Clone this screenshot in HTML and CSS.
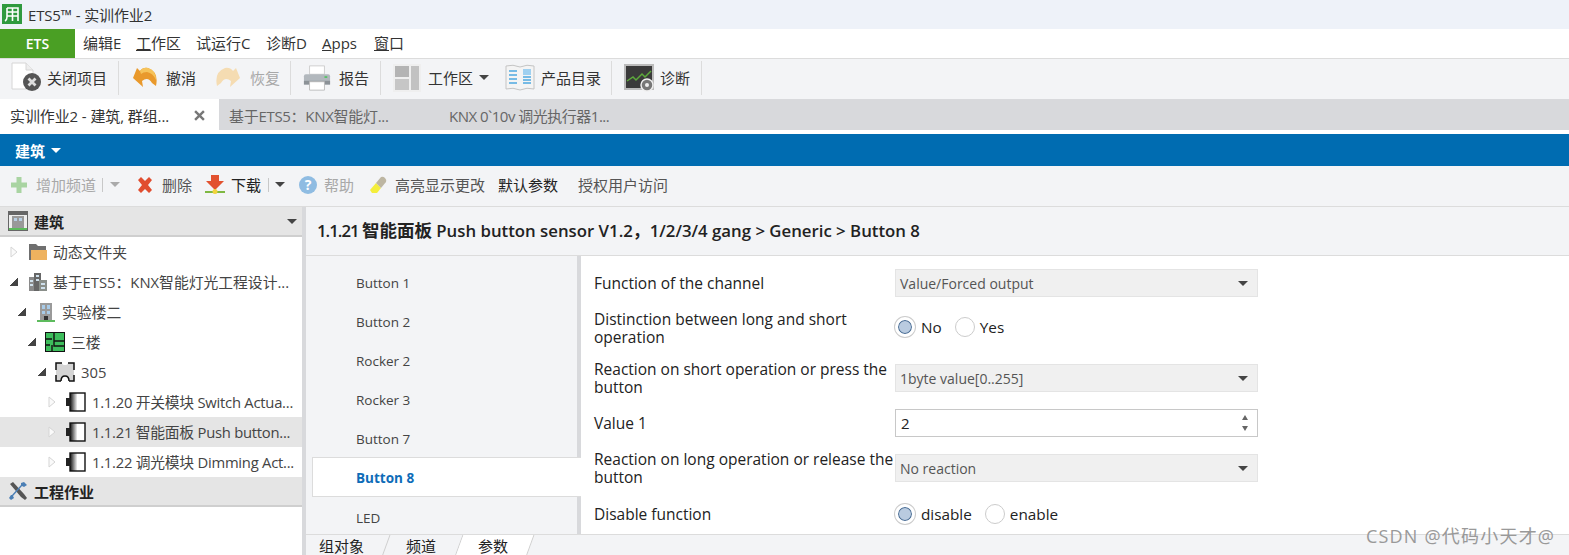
FILE: index.html
```html
<!DOCTYPE html>
<html lang="zh">
<head>
<meta charset="utf-8">
<title>ETS5</title>
<link rel="stylesheet" href="styles.css">
</head>
<body>
<div class="titlebar">
  <svg class="logo" viewBox="0 0 20 20"><rect width="20" height="20" fill="#2f9a3f"/><path d="M5 4h11v13M5 4v9q0 3-2 4M5 8h11M5 12h11M10.500 4v13" fill="none" stroke="#fff" stroke-width="1.600"/></svg>
  <span>ETS5™ - 实训作业2</span>
</div>
<nav class="menubar">
  <div class="ets">ETS</div>
  <span class="m m1">编辑E</span>
  <span class="m m2"><u>工</u>作区</span>
  <span class="m m3">试运行C</span>
  <span class="m m4">诊断D</span>
  <span class="m m5"><u>A</u>pps</span>
  <span class="m m6"><u>窗</u>口</span>
</nav>
<div class="toolbar">
  <div class="tool t-close">
    <svg class="i32" viewBox="0 0 32 32"><path d="M2 1h14l7 7v19H2z" fill="#fff" stroke="#d6d6d6"/><path d="M16 1v7h7" fill="#eee" stroke="#d6d6d6"/><circle cx="22" cy="20" r="9" fill="#555"/><path d="M18.500 16.500l7 7M25.500 16.500l-7 7" stroke="#ddd" stroke-width="2.800"/></svg>
    <span>关闭项目</span>
  </div>
  <div class="tool t-undo">
    <svg class="i26" viewBox="0 0 26 26"><path d="M1 13l10 9-1-6q6-5 10 2l4 3q3-14-8-18-5-1-8 3L5 3z" fill="#e9992c"/><path d="M8 6q3-4 8-3 8 2 8 12-3-7-9-8-4 0-6 2z" fill="#f6c35a"/></svg>
    <span>撤消</span>
  </div>
  <div class="tool t-redo off">
    <svg class="i26" viewBox="0 0 26 26"><path d="M25 13l-10 9 1-6q-6-5-10 2l-4 3q-3-14 8-18 5-1 8 3l3-3z" fill="#f5dcb2"/></svg>
    <span>恢复</span>
  </div>
  <div class="tool t-report">
    <svg class="i30" viewBox="0 0 30 30"><path d="M7 2h16v9H7z" fill="#fff" stroke="#ccc"/><path d="M3 11h24q2 0 2 2v9H1v-9q0-2 2-2z" fill="#b2b8bd"/><path d="M1 18h28v4H1z" fill="#8c9297"/><path d="M7 19h16v9H7z" fill="#fff" stroke="#bbb"/><rect x="23" y="13" width="3" height="2" fill="#5bc26a"/></svg>
    <span>报告</span>
  </div>
  <div class="tool t-work">
    <svg class="i30" viewBox="0 0 28 28"><rect width="28" height="28" fill="#efefef"/><rect x="2" y="2" width="14" height="11" fill="#b4b4b4"/><rect x="2" y="15" width="14" height="11" fill="#c6c6c6"/><rect x="18" y="2" width="8" height="24" fill="#c2c2c2"/></svg>
    <span>工作区</span>
    <i class="caret dark"></i>
  </div>
  <div class="tool t-cat">
    <svg class="i30" viewBox="0 0 30 28"><path d="M1 2q7-2 14 1 7-3 14-1v23q-7-2-14 1-7-3-14-1z" fill="#f4f4f4" stroke="#c4c4c4"/><path d="M4 7h8M4 11h8M4 15h8M4 19h8M18 13h8M18 16h8M18 19h8" stroke="#4ea8e0" stroke-width="1.500"/><rect x="18" y="5" width="8" height="6" fill="#9fd0f0"/></svg>
    <span>产品目录</span>
  </div>
  <div class="tool t-diag">
    <svg class="i30" viewBox="0 0 30 28"><rect x="1" y="1" width="28" height="24" fill="#3a3a3a" stroke="#bbb" stroke-width="2"/><path d="M3 17l6-4 3 3 6-6 3 3 6-6" fill="none" stroke="#5da93c" stroke-width="1.500"/><circle cx="23" cy="21" r="6" fill="#777" stroke="#eee" stroke-width="1.500"/><circle cx="23" cy="21" r="2" fill="#eee"/></svg>
    <span>诊断</span>
  </div>
</div>
<div class="tabs">
  <div class="tab active"><span>实训作业2 - 建筑, 群组...</span><svg class="x" viewBox="0 0 10 10"><path d="M1 1l8 8M9 1l-8 8" stroke="#777" stroke-width="2.200"/></svg></div>
  <div class="tab t2">基于ETS5：KNX智能灯...</div>
  <div class="tab t3">KNX 0`10v 调光执行器1...</div>
</div>
<div class="bluebar"><b>建筑</b><i class="caret white"></i></div>
<div class="subbar">
  <svg class="i18 s-add" viewBox="0 0 18 18"><path d="M6.500 1h5v5.500H17v5h-5.500V17h-5v-5.500H1v-5h5.500z" fill="#a9d4a2"/></svg>
  <span class="s-t1 off">增加频道</span><i class="vr s-v1"></i><i class="caret grey s-c1"></i>
  <svg class="i18 s-del" viewBox="0 0 18 18"><path d="M2 4l3-3 4 4 4-4 3 3-4 5 4 5-3 3-4-4-4 4-3-3 4-5z" fill="#e14d2f"/></svg>
  <span class="s-t2">删除</span>
  <svg class="i20 s-dl" viewBox="0 0 20 20"><path d="M6 0h8v6h5l-9 9-9-9h5z" fill="#e2522f"/><path d="M0 16h20v2H0z" fill="#7fb843"/><circle cx="10" cy="16.500" r="2.500" fill="#f2d43c"/></svg>
  <span class="s-t3 dk">下载</span><i class="vr s-v2"></i><i class="caret dark s-c2"></i>
  <svg class="i18 s-help" viewBox="0 0 18 18"><circle cx="9" cy="9" r="9" fill="#8fbce2"/><text x="9" y="14" text-anchor="middle" class="qm">?</text></svg>
  <span class="s-t4 off">帮助</span>
  <svg class="i18 s-hl" viewBox="0 0 18 18"><path d="M1 14l6-7 5 5-4 5H3z" fill="#f4ee3c"/><path d="M7 7l5-6q2-1 4 1t1 4l-5 6z" fill="#bdb6a2"/></svg>
  <span class="s-t5">高亮显示更改</span>
  <span class="s-t6 dk">默认参数</span>
  <span class="s-t7">授权用户访问</span>
</div>
<main class="work">
  <aside class="side">
    <div class="side-head">
      <svg class="i20" viewBox="0 0 20 20"><rect x=".5" y=".5" width="19" height="19" fill="#eee" stroke="#666"/><rect x="1" y="1" width="18" height="3" fill="#666"/><rect x="4" y="5" width="12" height="13" fill="#999"/><path d="M6 7h3v3H6zM11 7h3v3h-3z" fill="#b8cfe4"/><path d="M1 17h18v2H1z" fill="#5dbb5d"/></svg>
      <b>建筑</b>
      <i class="caret dark end"></i>
    </div>
    <div class="row l0"><svg class="tws" viewBox="0 0 8 12"><path d="M1 1l6 5-6 5z" fill="#fafafa" stroke="#d5d5d5"/></svg><svg class="i20" viewBox="0 0 20 20"><path d="M1 2h7l2 2h8v4H1z" fill="#6f6f6f"/><path d="M2 18V4" stroke="#6f6f6f" stroke-width="2"/><path d="M3 8h16v10H3z" fill="#eeb25f"/></svg><span>动态文件夹</span></div>
    <div class="row l0"><i class="tw"></i><svg class="i20" viewBox="0 0 20 20"><path d="M1 5h9v14H1z" fill="#8a8a8a"/><path d="M6 1h7v18H6z" fill="#666"/><path d="M11 8h8v11h-8z" fill="#8a8f8a"/><path d="M8 3h3v2H8zM8 7h3v2H8zM2 8h3v2H2zM2 12h3v2H2zM13 11h4v2h-4zM13 15h4v2h-4z" fill="#cfe0ec"/></svg><span>基于ETS5：KNX智能灯光工程设计...</span></div>
    <div class="row l1"><i class="tw"></i><svg class="i20" viewBox="0 0 20 20"><path d="M4 1h12v17H4z" fill="#9a9a9a"/><path d="M6 3h3v4H6zM11 3h3v4h-3zM6 9h3v3H6zM11 9h3v3h-3z" fill="#a8cbe8"/><path d="M8 14h4v4H8z" fill="#333"/><path d="M1 18h18v2H1z" fill="#5dbb5d"/></svg><span>实验楼二</span></div>
    <div class="row l2"><i class="tw"></i><svg class="i20" viewBox="0 0 20 20"><rect x=".5" y=".5" width="19" height="19" fill="#3dbd5c" stroke="#111"/><path d="M1 7h6M1 13h4M9 1v8h6M13 9h6M9 9v5h10M7 13v6" stroke="#111" stroke-width="1.400" fill="none"/></svg><span>三楼</span></div>
    <div class="row l3"><i class="tw"></i><svg class="i20" viewBox="0 0 20 20"><path d="M1 1h6q0 2 3 2t3-2h6v18h-5q0-5-4-5t-4 5H1z" fill="#d5d5d5"/><path d="M1 8V1h6M13 1h6v7M19 13v6h-5M6 19H1v-6M6 19q0-5 4-5t4 5" stroke="#111" stroke-width="1.500" fill="none"/></svg><span>305</span></div>
    <div class="row l4"><svg class="tws" viewBox="0 0 8 12"><path d="M1 1l6 5-6 5z" fill="#fafafa" stroke="#d5d5d5"/></svg><svg class="i20" viewBox="0 0 20 20"><use href="#dev"/></svg><span>1.1.20 开关模块 Switch Actua...</span></div>
    <div class="row l4 sel"><svg class="tws" viewBox="0 0 8 12"><path d="M1 1l6 5-6 5z" fill="#fafafa" stroke="#d5d5d5"/></svg><svg class="i20" viewBox="0 0 20 20"><use href="#dev"/></svg><span>1.1.21 智能面板 Push button...</span></div>
    <div class="row l4"><svg class="tws" viewBox="0 0 8 12"><path d="M1 1l6 5-6 5z" fill="#fafafa" stroke="#d5d5d5"/></svg><svg class="i20" viewBox="0 0 20 20"><use href="#dev"/></svg><span>1.1.22 调光模块 Dimming Act...</span></div>
    <div class="side-head">
      <svg class="i20" viewBox="0 0 20 20"><path d="M2 3l3-2 11 12 3 4-2 2-4-3z" fill="#555"/><path d="M16 1l3 3-3 2-2-1-9 10 1 2-3 2-2-2 2-3 1 0 9-10v-2z" fill="#4b7fb5"/></svg>
      <b>工程作业</b>
    </div>
  </aside>
  <section class="panel">
    <h1 class="heading"><span class="pre">1.1.21 </span><b>智能面板</b> Push button sensor V1.2，1/2/3/4 gang &gt; Generic &gt; Button 8</h1>
    <div class="body">
      <ul class="nav">
        <li>Button 1</li>
        <li>Button 2</li>
        <li>Rocker 2</li>
        <li>Rocker 3</li>
        <li>Button 7</li>
        <li class="cur">Button 8</li>
        <li>LED</li>
      </ul>
      <form class="form">
        <div class="f f28"><label>Function of the channel</label><div class="sel-box"><span>Value/Forced output</span><i class="caret dark"></i></div></div>
        <div class="f f38"><label>Distinction between long and short operation</label><div class="radios r-up"><i class="radio on"></i><span class="r1">No</span><i class="radio"></i><span>Yes</span></div></div>
        <div class="f f38"><label>Reaction on short operation or press the button</label><div class="sel-box"><span>1byte value[0..255]</span><i class="caret dark"></i></div></div>
        <div class="f f28"><label>Value 1</label><div class="num"><span>2</span><div class="spin"><i></i><i class="dn"></i></div></div></div>
        <div class="f f38"><label>Reaction on long operation or release the button</label><div class="sel-box"><span>No reaction</span><i class="caret dark"></i></div></div>
        <div class="f f30"><label>Disable function</label><div class="radios"><i class="radio on"></i><span class="r1">disable</span><i class="radio"></i><span>enable</span></div></div>
      </form>
    </div>
    <div class="btabs"><span class="bt b1">组对象</span><span class="bt b2">频道</span><span class="bt b3">参数</span></div>
  </section>
</main>
<div class="wm">CSDN @代码小天才@</div>
<svg class="defs" width="0" height="0"><defs><linearGradient id="dg" x1="0" x2="1" y1="0" y2="0"><stop offset="0" stop-color="#111"/><stop offset=".5" stop-color="#fff"/></linearGradient><g id="dev"><rect x="4" y="1" width="15" height="18" fill="url(#dg)" stroke="#111" stroke-width="1.400"/><path d="M0 6h5v8H0z" fill="#222"/></g></defs></svg>
</body>
</html>
```
FILE: styles.css
```css
* { box-sizing: border-box; }
html, body { margin: 0; padding: 0; }
body {
  width: 1569px; height: 555px; overflow: hidden; position: relative;
  font-family: "Open Sans", "Noto Sans CJK SC", sans-serif;
  font-size: 15px; color: #333; background: #fff;
}
i { display: block; font-style: normal; }
svg { display: block; flex: none; }
.defs { position: absolute; }
.i18 { width: 18px; height: 18px; }
.i20 { width: 20px; height: 20px; }
.i26 { width: 26px; height: 26px; }
.i30 { width: 30px; height: 28px; }
.i32 { width: 32px; height: 32px; }
.off { color: #a8a8a8; }
.dk { color: #222; }

.caret { width: 0; height: 0; border-left: 5px solid transparent; border-right: 5px solid transparent; border-top: 5px solid #444; }
.caret.white { border-top-color: #fff; }
.caret.grey { border-top-color: #aaa; }

.titlebar { height: 29px; padding: 0 0 1px 2px; background: #eef2f9; display: flex; align-items: center; gap: 6px; color: #333; letter-spacing: -.15px; }
.logo { width: 20px; height: 20px; }

.menubar { height: 30px; display: flex; align-items: center; border-bottom: 1px solid #dcdcdc; color: #333; }
.ets { width: 75px; height: 29px; background: #4a9f24; color: #fff; font-weight: 600; text-align: center; line-height: 29px; font-size: 14px; }
.m { white-space: nowrap; margin-bottom: 2px; }
.m1 { margin-left: 8px; width: 53px; }
.m2 { width: 60px; }
.m3 { width: 70px; }
.m4 { width: 56px; }
.m5 { width: 52px; }

.toolbar { height: 40px; padding-bottom: 3px; background: #f3f4f6; display: flex; align-items: center; }
.tool { height: 34px; display: flex; align-items: center; flex: none; white-space: nowrap; }
.t-close { width: 119px; padding-left: 10px; gap: 5px; border-right: 1px solid #dcdcdc; }
.t-undo { width: 94px; padding-left: 13px; gap: 8px; }
.t-redo { width: 78px; padding-left: 2px; gap: 9px; border-right: 1px solid #dcdcdc; }
.t-report { width: 90px; padding-left: 11px; gap: 7px; border-right: 1px solid #dcdcdc; }
.t-work { width: 113px; padding-left: 11px; gap: 6px; }
.t-cat { width: 118px; padding-left: 11px; gap: 6px; border-right: 1px solid #dcdcdc; }
.t-diag { width: 90px; padding-left: 12px; gap: 6px; border-right: 1px solid #dcdcdc; }

.tabs { height: 31px; background: #d8d9dc; display: flex; align-items: center; color: #666; }
.tab { white-space: nowrap; height: 100%; padding-top: 1px; display: flex; align-items: center; }
.active { width: 219px; background: #fff; color: #333; padding: 1px 14px 0 10px; justify-content: space-between; letter-spacing: -.1px; }
.x { width: 11px; height: 11px; }
.t2 { width: 230px; padding-left: 10px; letter-spacing: -.3px; }
.t3 { letter-spacing: -.5px; }

.bluebar { margin-top: 4px; height: 32px; background: #006cb1; color: #fff; display: flex; align-items: center; padding-left: 15px; gap: 6px; }
.bluebar b { font-weight: 700; }

.subbar { height: 41px; padding: 0 0 3px 10px; background: #f3f4f6; display: flex; align-items: center; border-bottom: 1px solid #dcdcdc; white-space: nowrap; color: #555; }
.vr { width: 1px; height: 14px; background: #c8c8c8; }
.s-t1 { margin-left: 8px; }
.s-v1 { margin-left: 6px; }
.s-c1 { margin-left: 7px; }
.s-del { margin-left: 16px; }
.s-t2 { margin-left: 8px; }
.s-dl { margin-left: 13px; }
.s-t3 { margin-left: 6px; }
.s-v2 { margin-left: 7px; }
.s-c2 { margin-left: 6px; }
.s-help { margin-left: 14px; }
.s-t4 { margin-left: 7px; }
.s-hl { margin-left: 15px; }
.s-t5 { margin-left: 8px; }
.s-t6 { margin-left: 13px; }
.s-t7 { margin-left: 20px; }
.qm { font-size: 14px; font-weight: 700; fill: #fff; }

.work { display: flex; height: 348px; }
.side { width: 306px; flex: none; border-right: 4px solid #d8d9dc; }
.side-head { height: 30px; background: #e5e5e5; border-bottom: 2px solid #cfcfcf; display: flex; align-items: center; padding-left: 8px; gap: 6px; color: #222; }
.side-head b { font-weight: 700; }
.end { margin-left: auto; margin-right: 5px; }
.row { height: 30px; padding-bottom: 1px; display: flex; align-items: center; white-space: nowrap; color: #444; }
.row span { margin-left: 6px; font-size: 14.800px; }
.row.l0 { padding-left: 10px; }
.row.l0 span { margin-left: 5px; }
.l0 .tw { margin-right: 10px; }
.l0 .tws { margin-right: 10px; }
.l1 { padding-left: 18px; }
.l2 { padding-left: 28px; }
.l3 { padding-left: 38px; }
.l4 { padding-left: 48px; }
.l1 .tw { margin-right: 10px; }
.l2 .tw, .l3 .tw { margin-right: 9px; }
.l4 .tws { margin-right: 10px; }
.row.l4 span { letter-spacing: -.25px; }
.tw { width: 8px; height: 8px; background: linear-gradient(135deg, transparent 50%, #444 50%); }
.tws { width: 8px; height: 12px; }
.sel { background: #e5e5e5; }

.panel { flex: 1; min-width: 0; display: flex; flex-direction: column; }
.heading { margin: 0; height: 49px; padding-left: 11px; background: #f3f4f6; border-bottom: 1px solid #dcdcdc; line-height: 47px; font-size: 16.800px; font-weight: 600; color: #222; white-space: nowrap; }
.pre { letter-spacing: -1px; }
.heading b { font-weight: 700; font-size: 17.500px; }
.body { flex: 1; display: flex; min-height: 0; }
.nav { list-style: none; margin: 0; padding: 6px 0 0 6px; width: 275px; flex: none; background: #f3f4f6; border-right: 4px solid #d8d9dc; font-size: 13.500px; }
.nav li { height: 39px; line-height: 42px; padding-left: 44px; color: #444; }
.nav li.cur { height: 40px; background: #fff; border: 1px solid #dcdcdc; border-right: 0; margin-right: -4px; line-height: 40px; padding-left: 43px; color: #0e6cb8; font-weight: 700; }
.form { flex: 1; padding: 13px 0 0 13px; display: flex; flex-direction: column; gap: 12px; color: #222; }
.f { display: flex; align-items: center; }
.f label { width: 301px; flex: none; line-height: 18px; font-size: 15.500px; }
.f28 { height: 28px; }
.f30 { height: 30px; }
.f38 { height: 38px; }
.sel-box { width: 363px; height: 28px; background: #f0f0f0; border: 1px solid #e4e4e4; display: flex; align-items: center; justify-content: space-between; padding: 0 9px 0 4px; color: #555; font-size: 14px; }
.num { width: 363px; height: 28px; border: 1px solid #c8c8c8; display: flex; align-items: center; justify-content: space-between; padding: 0 9px 0 5px; color: #222; }
.spin i { width: 0; height: 0; border-left: 3.500px solid transparent; border-right: 3.500px solid transparent; border-bottom: 5px solid #666; margin-bottom: 6px; }
.spin i.dn { border-bottom: 0; border-top: 5px solid #666; margin-bottom: 0; }
.radios { display: flex; align-items: center; font-size: 15.300px; }
.r-up { margin-bottom: 2px; }
.radio { width: 20px; height: 20px; border: 1px solid #ccc; border-radius: 50%; margin-right: 5px; background: #fff; }
.radio.on { background: #b9cbe0; border: 3px solid #fff; box-shadow: 0 0 0 1px #ccc, inset 0 0 0 1px #476a91; margin-right: 6px; }
.r1 { margin-right: 13px; }
.btabs { height: 21px; background: #f3f4f6; border-top: 1px solid #dcdcdc; display: flex; color: #222; overflow: hidden; }
.bt { display: block; position: relative; z-index: 0; height: 20px; padding-top: 2px; line-height: 18px; }
.bt::before { content: ""; position: absolute; inset: -1px 0 0 0; transform: skewX(-20deg); border-right: 1px solid #cfcfcf; z-index: -1; }
.b1 { width: 81px; padding-left: 13px; }
.b2 { width: 73px; padding-left: 19px; }
.b3 { width: 71px; padding-left: 18px; }
.b3::before { background: #fff; }

.wm { position: absolute; left: 1366px; top: 524px; font-size: 18px; line-height: 24px; color: #999; letter-spacing: 1.200px; white-space: nowrap; }
```
